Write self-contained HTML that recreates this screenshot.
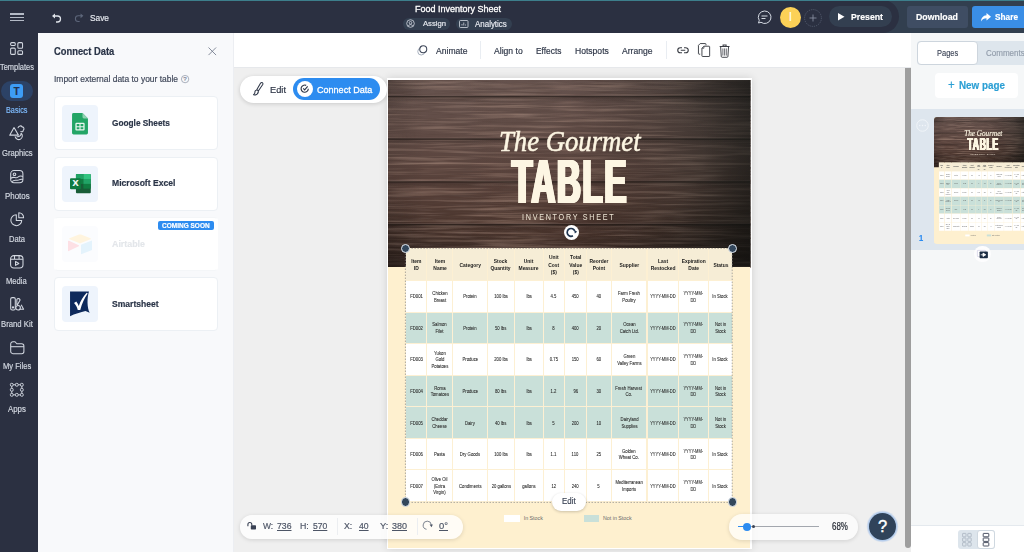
<!DOCTYPE html>
<html lang="en"><head><meta charset="utf-8"><title>Food Inventory Sheet</title>
<style>
html,body{margin:0;padding:0}
body{width:1024px;height:552px;overflow:hidden;position:relative;background:#efefef;font-family:"Liberation Sans",sans-serif;}
.a{position:absolute}
.t{position:absolute;white-space:nowrap;display:block;transform-origin:0 50%;-webkit-text-stroke:0.18px}
svg{position:absolute;overflow:visible}
.c{display:flex;align-items:center;justify-content:center;text-align:center;font-size:5px;line-height:6.8px;color:#2a2a2a;white-space:nowrap;overflow:hidden;box-sizing:border-box;padding-top:0.6px;-webkit-text-stroke:0.08px #2a2a2a}
.c span{display:inline-block;transform:scaleX(.85)}
.c span.d{transform:scaleX(.8)}
.c.h{font-weight:700;font-size:5.2px;line-height:7.6px;color:#1a1a1a;padding-top:2.2px;-webkit-text-stroke:0}
.c.h span{transform:scaleX(.95)}
.th .c{color:#555;-webkit-text-stroke:0}
</style></head><body>
<div class="a" style="left:234px;top:67px;width:677px;height:485px;background:#efefef"></div>
<div class="a" style="left:387px;top:78px;width:365px;height:471px;background:#fff;box-shadow:0 0 8px rgba(0,0,0,0.13)"></div>
<div class="a" style="left:387.7px;top:79.5px;width:362.5px;height:468px;background:#fef0cf"><svg style="left:0;top:0" width="362.5" height="187.3" viewBox="0 0 362.5 187.3"><defs><linearGradient id="wbg" x1="0" y1="0" x2="0" y2="1"><stop offset="0" stop-color="#67544f"/><stop offset="0.3" stop-color="#604b45"/><stop offset="0.55" stop-color="#574039"/><stop offset="0.8" stop-color="#49342c"/><stop offset="1" stop-color="#3b2b25"/></linearGradient><linearGradient id="whg" x1="0" y1="0" x2="1" y2="0"><stop offset="0" stop-color="#000" stop-opacity="0.10"/><stop offset="0.1" stop-color="#000" stop-opacity="0"/><stop offset="0.5" stop-color="#000" stop-opacity="0.02"/><stop offset="0.8" stop-color="#0c1412" stop-opacity="0.27"/><stop offset="1" stop-color="#0c1412" stop-opacity="0.55"/></linearGradient><radialGradient id="wcg" cx="0.42" cy="0.4" r="0.75"><stop offset="0" stop-color="#000" stop-opacity="0"/><stop offset="0.6" stop-color="#000" stop-opacity="0"/><stop offset="1" stop-color="#000" stop-opacity="0.38"/></radialGradient><linearGradient id="psg" x1="0" y1="0" x2="0" y2="1"><stop offset="0" stop-color="#1d1614" stop-opacity="0.22"/><stop offset="1" stop-color="#1d1614" stop-opacity="0"/></linearGradient><filter id="grg" x="0" y="0" width="100%" height="100%"><feTurbulence type="fractalNoise" baseFrequency="0.035 0.55" numOctaves="4" seed="7"/><feColorMatrix type="matrix" values="0 0 0 0 0.10  0 0 0 0 0.06  0 0 0 0 0.05  1.5 0 0 0 -0.62"/></filter><filter id="glg" x="0" y="0" width="100%" height="100%"><feTurbulence type="fractalNoise" baseFrequency="0.012 0.35" numOctaves="3" seed="23"/><feColorMatrix type="matrix" values="0 0 0 0 0.62  0 0 0 0 0.42  0 0 0 0 0.33  0.9 0 0 0 -0.40"/></filter></defs><rect width="362.5" height="187.3" fill="url(#wbg)"/><rect width="362.5" height="187.3" filter="url(#grg)"/><rect width="362.5" height="187.3" filter="url(#glg)"/><rect x="0" y="14.9" width="362.5" height="1.1" fill="#7a6660" opacity="0.35"/><rect x="0" y="15.9" width="362.5" height="1.5" fill="#1d1614" opacity="0.62"/><rect x="0" y="17.4" width="362.5" height="5" fill="url(#psg)"/><rect x="0" y="57.4" width="362.5" height="1.1" fill="#7a6660" opacity="0.35"/><rect x="0" y="58.4" width="362.5" height="1.5" fill="#1d1614" opacity="0.62"/><rect x="0" y="59.9" width="362.5" height="5" fill="url(#psg)"/><rect x="0" y="100.2" width="362.5" height="1.1" fill="#7a6660" opacity="0.35"/><rect x="0" y="101.2" width="362.5" height="1.5" fill="#1d1614" opacity="0.62"/><rect x="0" y="102.7" width="362.5" height="5" fill="url(#psg)"/><rect x="0" y="143.0" width="362.5" height="1.1" fill="#7a6660" opacity="0.35"/><rect x="0" y="144.0" width="362.5" height="1.5" fill="#1d1614" opacity="0.62"/><rect x="0" y="145.5" width="362.5" height="5" fill="url(#psg)"/><rect width="362.5" height="187.3" fill="url(#whg)"/><rect width="362.5" height="187.3" fill="url(#wcg)"/></svg><div class="a" style="left:0;top:187.3px;width:362.5px;height:280.7px;background:#fef0cf"></div><span class="t" style="left:111.5px;top:43px;width:142px;height:40px;"><span class="t" style="left:0;top:0;font-family:'Liberation Serif',serif;font-style:italic;font-size:29px;line-height:36px;color:#fdf6e3;-webkit-text-stroke:0.55px #fdf6e3;transform-origin:0 0;transform:scaleX(0.92)" id="script">The Gourmet</span></span><span class="t" style="left:123.9px;top:73.3px;font-weight:700;font-size:62.2px;line-height:58px;color:#fdf6e3;transform-origin:0 0;transform:scaleX(0.533);letter-spacing:3px;text-shadow:1px 0 #fdf6e3,-1px 0 #fdf6e3,2px 0 #fdf6e3,-2px 0 #fdf6e3,2.6px 0 #fdf6e3,-2.6px 0 #fdf6e3" id="ttl">TABLE</span><span class="t" style="-webkit-text-stroke:0;left:134.6px;top:132px;font-size:8.4px;line-height:10px;letter-spacing:2.0px;color:#efe7d6;transform-origin:0 50%;transform:scaleX(0.86)" id="inv">INVENTORY SHEET</span><div class="a" style="left:18.2px;top:168.7px;width:326.6px;height:253.4px;background:#fdf0d3"></div><div class="a c h" style="left:18.80px;top:169.20px;width:19.60px;height:31.30px;background:#f6edd6"><span>Item<br>ID</span></div><div class="a c h" style="left:39.60px;top:169.20px;width:24.70px;height:31.30px;background:#f6edd6"><span>Item<br>Name</span></div><div class="a c h" style="left:65.50px;top:169.20px;width:33.60px;height:31.30px;background:#f6edd6"><span>Category</span></div><div class="a c h" style="left:100.30px;top:169.20px;width:26.00px;height:31.30px;background:#f6edd6"><span>Stock<br>Quantity</span></div><div class="a c h" style="left:127.50px;top:169.20px;width:27.40px;height:31.30px;background:#f6edd6"><span>Unit<br>Measure</span></div><div class="a c h" style="left:156.10px;top:169.20px;width:20.10px;height:31.30px;background:#f6edd6"><span>Unit<br>Cost<br>($)</span></div><div class="a c h" style="left:177.40px;top:169.20px;width:20.60px;height:31.30px;background:#f6edd6"><span>Total<br>Value<br>($)</span></div><div class="a c h" style="left:199.20px;top:169.20px;width:23.80px;height:31.30px;background:#f6edd6"><span>Reorder<br>Point</span></div><div class="a c h" style="left:224.20px;top:169.20px;width:34.50px;height:31.30px;background:#f6edd6"><span>Supplier</span></div><div class="a c h" style="left:259.90px;top:169.20px;width:30.50px;height:31.30px;background:#f6edd6"><span>Last<br>Restocked</span></div><div class="a c h" style="left:291.60px;top:169.20px;width:28.70px;height:31.30px;background:#f6edd6"><span>Expiration<br>Date</span></div><div class="a c h" style="left:321.50px;top:169.20px;width:22.70px;height:31.30px;background:#f6edd6"><span>Status</span></div><div class="a c" style="left:18.80px;top:201.50px;width:19.60px;height:30.58px;background:#ffffff"><span>FD001</span></div><div class="a c" style="left:39.60px;top:201.50px;width:24.70px;height:30.58px;background:#ffffff"><span>Chicken<br>Breast</span></div><div class="a c" style="left:65.50px;top:201.50px;width:33.60px;height:30.58px;background:#ffffff"><span>Protein</span></div><div class="a c" style="left:100.30px;top:201.50px;width:26.00px;height:30.58px;background:#ffffff"><span>100 lbs</span></div><div class="a c" style="left:127.50px;top:201.50px;width:27.40px;height:30.58px;background:#ffffff"><span>lbs</span></div><div class="a c" style="left:156.10px;top:201.50px;width:20.10px;height:30.58px;background:#ffffff"><span>4.5</span></div><div class="a c" style="left:177.40px;top:201.50px;width:20.60px;height:30.58px;background:#ffffff"><span>450</span></div><div class="a c" style="left:199.20px;top:201.50px;width:23.80px;height:30.58px;background:#ffffff"><span>40</span></div><div class="a c" style="left:224.20px;top:201.50px;width:34.50px;height:30.58px;background:#ffffff"><span>Farm Fresh<br>Poultry</span></div><div class="a c" style="left:259.90px;top:201.50px;width:30.50px;height:30.58px;background:#ffffff"><span class="d">YYYY-MM-DD</span></div><div class="a c" style="left:291.60px;top:201.50px;width:28.70px;height:30.58px;background:#ffffff"><span class="d">YYYY-MM-<br>DD</span></div><div class="a c" style="left:321.50px;top:201.50px;width:22.70px;height:30.58px;background:#ffffff"><span>In Stock</span></div><div class="a c" style="left:18.80px;top:233.08px;width:19.60px;height:30.58px;background:#c9e0d9"><span>FD002</span></div><div class="a c" style="left:39.60px;top:233.08px;width:24.70px;height:30.58px;background:#c9e0d9"><span>Salmon<br>Filet</span></div><div class="a c" style="left:65.50px;top:233.08px;width:33.60px;height:30.58px;background:#c9e0d9"><span>Protein</span></div><div class="a c" style="left:100.30px;top:233.08px;width:26.00px;height:30.58px;background:#c9e0d9"><span>50 lbs</span></div><div class="a c" style="left:127.50px;top:233.08px;width:27.40px;height:30.58px;background:#c9e0d9"><span>lbs</span></div><div class="a c" style="left:156.10px;top:233.08px;width:20.10px;height:30.58px;background:#c9e0d9"><span>8</span></div><div class="a c" style="left:177.40px;top:233.08px;width:20.60px;height:30.58px;background:#c9e0d9"><span>400</span></div><div class="a c" style="left:199.20px;top:233.08px;width:23.80px;height:30.58px;background:#c9e0d9"><span>20</span></div><div class="a c" style="left:224.20px;top:233.08px;width:34.50px;height:30.58px;background:#c9e0d9"><span>Ocean<br>Catch Ltd.</span></div><div class="a c" style="left:259.90px;top:233.08px;width:30.50px;height:30.58px;background:#c9e0d9"><span class="d">YYYY-MM-DD</span></div><div class="a c" style="left:291.60px;top:233.08px;width:28.70px;height:30.58px;background:#c9e0d9"><span class="d">YYYY-MM-<br>DD</span></div><div class="a c" style="left:321.50px;top:233.08px;width:22.70px;height:30.58px;background:#c9e0d9"><span>Not in<br>Stock</span></div><div class="a c" style="left:18.80px;top:264.66px;width:19.60px;height:30.58px;background:#ffffff"><span>FD003</span></div><div class="a c" style="left:39.60px;top:264.66px;width:24.70px;height:30.58px;background:#ffffff"><span>Yukon<br>Gold<br>Potatoes</span></div><div class="a c" style="left:65.50px;top:264.66px;width:33.60px;height:30.58px;background:#ffffff"><span>Produce</span></div><div class="a c" style="left:100.30px;top:264.66px;width:26.00px;height:30.58px;background:#ffffff"><span>200 lbs</span></div><div class="a c" style="left:127.50px;top:264.66px;width:27.40px;height:30.58px;background:#ffffff"><span>lbs</span></div><div class="a c" style="left:156.10px;top:264.66px;width:20.10px;height:30.58px;background:#ffffff"><span>0.75</span></div><div class="a c" style="left:177.40px;top:264.66px;width:20.60px;height:30.58px;background:#ffffff"><span>150</span></div><div class="a c" style="left:199.20px;top:264.66px;width:23.80px;height:30.58px;background:#ffffff"><span>60</span></div><div class="a c" style="left:224.20px;top:264.66px;width:34.50px;height:30.58px;background:#ffffff"><span>Green<br>Valley Farms</span></div><div class="a c" style="left:259.90px;top:264.66px;width:30.50px;height:30.58px;background:#ffffff"><span class="d">YYYY-MM-DD</span></div><div class="a c" style="left:291.60px;top:264.66px;width:28.70px;height:30.58px;background:#ffffff"><span class="d">YYYY-MM-<br>DD</span></div><div class="a c" style="left:321.50px;top:264.66px;width:22.70px;height:30.58px;background:#ffffff"><span>In Stock</span></div><div class="a c" style="left:18.80px;top:296.24px;width:19.60px;height:30.58px;background:#c9e0d9"><span>FD004</span></div><div class="a c" style="left:39.60px;top:296.24px;width:24.70px;height:30.58px;background:#c9e0d9"><span>Roma<br>Tomatoes</span></div><div class="a c" style="left:65.50px;top:296.24px;width:33.60px;height:30.58px;background:#c9e0d9"><span>Produce</span></div><div class="a c" style="left:100.30px;top:296.24px;width:26.00px;height:30.58px;background:#c9e0d9"><span>80 lbs</span></div><div class="a c" style="left:127.50px;top:296.24px;width:27.40px;height:30.58px;background:#c9e0d9"><span>lbs</span></div><div class="a c" style="left:156.10px;top:296.24px;width:20.10px;height:30.58px;background:#c9e0d9"><span>1.2</span></div><div class="a c" style="left:177.40px;top:296.24px;width:20.60px;height:30.58px;background:#c9e0d9"><span>96</span></div><div class="a c" style="left:199.20px;top:296.24px;width:23.80px;height:30.58px;background:#c9e0d9"><span>30</span></div><div class="a c" style="left:224.20px;top:296.24px;width:34.50px;height:30.58px;background:#c9e0d9"><span>Fresh Harvest<br>Co.</span></div><div class="a c" style="left:259.90px;top:296.24px;width:30.50px;height:30.58px;background:#c9e0d9"><span class="d">YYYY-MM-DD</span></div><div class="a c" style="left:291.60px;top:296.24px;width:28.70px;height:30.58px;background:#c9e0d9"><span class="d">YYYY-MM-<br>DD</span></div><div class="a c" style="left:321.50px;top:296.24px;width:22.70px;height:30.58px;background:#c9e0d9"><span>Not in<br>Stock</span></div><div class="a c" style="left:18.80px;top:327.82px;width:19.60px;height:30.58px;background:#c9e0d9"><span>FD005</span></div><div class="a c" style="left:39.60px;top:327.82px;width:24.70px;height:30.58px;background:#c9e0d9"><span>Cheddar<br>Cheese</span></div><div class="a c" style="left:65.50px;top:327.82px;width:33.60px;height:30.58px;background:#c9e0d9"><span>Dairy</span></div><div class="a c" style="left:100.30px;top:327.82px;width:26.00px;height:30.58px;background:#c9e0d9"><span>40 lbs</span></div><div class="a c" style="left:127.50px;top:327.82px;width:27.40px;height:30.58px;background:#c9e0d9"><span>lbs</span></div><div class="a c" style="left:156.10px;top:327.82px;width:20.10px;height:30.58px;background:#c9e0d9"><span>5</span></div><div class="a c" style="left:177.40px;top:327.82px;width:20.60px;height:30.58px;background:#c9e0d9"><span>200</span></div><div class="a c" style="left:199.20px;top:327.82px;width:23.80px;height:30.58px;background:#c9e0d9"><span>10</span></div><div class="a c" style="left:224.20px;top:327.82px;width:34.50px;height:30.58px;background:#c9e0d9"><span>Dairyland<br>Supplies</span></div><div class="a c" style="left:259.90px;top:327.82px;width:30.50px;height:30.58px;background:#c9e0d9"><span class="d">YYYY-MM-DD</span></div><div class="a c" style="left:291.60px;top:327.82px;width:28.70px;height:30.58px;background:#c9e0d9"><span class="d">YYYY-MM-<br>DD</span></div><div class="a c" style="left:321.50px;top:327.82px;width:22.70px;height:30.58px;background:#c9e0d9"><span>Not in<br>Stock</span></div><div class="a c" style="left:18.80px;top:359.40px;width:19.60px;height:30.58px;background:#ffffff"><span>FD006</span></div><div class="a c" style="left:39.60px;top:359.40px;width:24.70px;height:30.58px;background:#ffffff"><span>Pasta</span></div><div class="a c" style="left:65.50px;top:359.40px;width:33.60px;height:30.58px;background:#ffffff"><span>Dry Goods</span></div><div class="a c" style="left:100.30px;top:359.40px;width:26.00px;height:30.58px;background:#ffffff"><span>100 lbs</span></div><div class="a c" style="left:127.50px;top:359.40px;width:27.40px;height:30.58px;background:#ffffff"><span>lbs</span></div><div class="a c" style="left:156.10px;top:359.40px;width:20.10px;height:30.58px;background:#ffffff"><span>1.1</span></div><div class="a c" style="left:177.40px;top:359.40px;width:20.60px;height:30.58px;background:#ffffff"><span>110</span></div><div class="a c" style="left:199.20px;top:359.40px;width:23.80px;height:30.58px;background:#ffffff"><span>25</span></div><div class="a c" style="left:224.20px;top:359.40px;width:34.50px;height:30.58px;background:#ffffff"><span>Golden<br>Wheat Co.</span></div><div class="a c" style="left:259.90px;top:359.40px;width:30.50px;height:30.58px;background:#ffffff"><span class="d">YYYY-MM-DD</span></div><div class="a c" style="left:291.60px;top:359.40px;width:28.70px;height:30.58px;background:#ffffff"><span class="d">YYYY-MM-<br>DD</span></div><div class="a c" style="left:321.50px;top:359.40px;width:22.70px;height:30.58px;background:#ffffff"><span>In Stock</span></div><div class="a c" style="left:18.80px;top:390.98px;width:19.60px;height:30.58px;background:#ffffff"><span>FD007</span></div><div class="a c" style="left:39.60px;top:390.98px;width:24.70px;height:30.58px;background:#ffffff"><span>Olive Oil<br>(Extra<br>Virgin)</span></div><div class="a c" style="left:65.50px;top:390.98px;width:33.60px;height:30.58px;background:#ffffff"><span>Condiments</span></div><div class="a c" style="left:100.30px;top:390.98px;width:26.00px;height:30.58px;background:#ffffff"><span>20 gallons</span></div><div class="a c" style="left:127.50px;top:390.98px;width:27.40px;height:30.58px;background:#ffffff"><span>gallons</span></div><div class="a c" style="left:156.10px;top:390.98px;width:20.10px;height:30.58px;background:#ffffff"><span>12</span></div><div class="a c" style="left:177.40px;top:390.98px;width:20.60px;height:30.58px;background:#ffffff"><span>240</span></div><div class="a c" style="left:199.20px;top:390.98px;width:23.80px;height:30.58px;background:#ffffff"><span>5</span></div><div class="a c" style="left:224.20px;top:390.98px;width:34.50px;height:30.58px;background:#ffffff"><span>Mediterranean<br>Imports</span></div><div class="a c" style="left:259.90px;top:390.98px;width:30.50px;height:30.58px;background:#ffffff"><span class="d">YYYY-MM-DD</span></div><div class="a c" style="left:291.60px;top:390.98px;width:28.70px;height:30.58px;background:#ffffff"><span class="d">YYYY-MM-<br>DD</span></div><div class="a c" style="left:321.50px;top:390.98px;width:22.70px;height:30.58px;background:#ffffff"><span>In Stock</span></div><div class="a" style="left:116px;top:435.5px;width:16.3px;height:7px;background:#fff"></div><span class="t" style="left:136px;top:434.6px;-webkit-text-stroke:0;font-size:5.3px;line-height:8px;color:#6a6a6a">In Stock</span><div class="a" style="left:196px;top:435.5px;width:15.8px;height:7px;background:#c9e0d9"></div><span class="t" style="left:215.300px;top:434.6px;-webkit-text-stroke:0;font-size:5.3px;line-height:8px;color:#6a6a6a">Not in Stock</span></div>
<svg style="left:405.4px;top:247.8px" width="327.4" height="254" viewBox="0 0 327.4 254"><rect x="0.4" y="0.4" width="326.8" height="254" fill="none" stroke="#8a8a8a" stroke-width="0.7" stroke-dasharray="1.5 1.5"/></svg>
<div class="a" style="left:400.8px;top:243.6px;width:7.4px;height:7.4px;border-radius:50%;background:#33475c;border:1.7px solid #e4ebf3"></div>
<div class="a" style="left:727.6px;top:243.6px;width:7.4px;height:7.4px;border-radius:50%;background:#33475c;border:1.7px solid #e4ebf3"></div>
<div class="a" style="left:400.8px;top:497.2px;width:7.4px;height:7.4px;border-radius:50%;background:#33475c;border:1.7px solid #e4ebf3"></div>
<div class="a" style="left:727.6px;top:497.2px;width:7.4px;height:7.4px;border-radius:50%;background:#33475c;border:1.7px solid #e4ebf3"></div>
<div class="a" style="left:564.4px;top:225px;width:15px;height:15px;border-radius:50%;background:#fff"></div>
<svg style="left:564.4px;top:225px" width="15" height="15" viewBox="0 0 15 15"><path d="M10.72 5.94 A3.9 3.9 0 1 0 8.93 10.84" fill="none" stroke="#1f3550" stroke-width="1.7"/><path d="M10.1 4.9 L13.2 6.7 L10.8 8.4 Z" fill="#1f3550"/></svg>
<div class="a" style="left:239.5px;top:75.5px;width:147.5px;height:27.5px;border-radius:14px;background:#fff;box-shadow:0 1px 4px rgba(0,0,0,0.16)"></div>
<svg style="left:252.800px;top:82px" width="10.500" height="13.500" viewBox="0 0 21 27"><path d="M17.500 1 C19.500 1 20.500 3 19.500 5 L11 17.500 L7.500 15.500 L15 2.500 C15.600 1.500 16.500 1 17.500 1 Z" fill="none" stroke="#2f3748" stroke-width="2.1" stroke-linejoin="round"/><path d="M7.200 16.500 C4.500 16.500 3.500 19 3.800 21.500 C3.500 23.500 2 24.500 1 25.500 C5 26.500 9.500 24.500 10.500 20.500 C10.800 19 10.200 18 9.800 17.800" fill="none" stroke="#2f3748" stroke-width="2.1" stroke-linejoin="round"/></svg>
<span class="t" style="left:270.30px;top:83.86px;font-size:9.3px;line-height:12.09px;color:#2f3748;transform:scaleX(0.998);-webkit-text-stroke:0.2px #2f3748;">Edit</span>
<div class="a" style="left:293px;top:78px;width:87px;height:22px;border-radius:11px;background:#2d8cf0"></div>
<div class="a" style="left:296.500px;top:81px;width:16px;height:16px;border-radius:50%;background:#fff"></div>
<svg style="left:299.800px;top:84.300px" width="9.400" height="9.400" viewBox="0 0 19 19"><path d="M16.800 9.500 A7.300 7.300 0 1 1 12.500 2.800" fill="none" stroke="#2f3748" stroke-width="2.3"/><path d="M6.500 9 L9.400 11.800 L15.500 5" fill="none" stroke="#2f3748" stroke-width="2.3"/></svg>
<span class="t" style="left:317.00px;top:83.60px;font-size:9.53px;line-height:12.39px;color:#ffffff;transform:scaleX(0.950);-webkit-text-stroke:0.3px #fff;">Connect Data</span>
<div class="a" style="left:551.800px;top:493px;width:34.200px;height:18px;border-radius:9px;background:#fff;box-shadow:0 1px 3px rgba(0,0,0,0.2)"></div>
<span class="t" style="left:562.00px;top:496.32px;font-size:9.2px;line-height:11.96px;color:#3a4254;transform:scaleX(0.858);">Edit</span>
<div class="a" style="left:240px;top:514.500px;width:223px;height:24.500px;border-radius:12.300px;background:rgba(255,255,255,0.8);box-shadow:0 1px 4px rgba(0,0,0,0.13)"></div>
<svg style="left:247px;top:521px" width="9.500" height="9.500" viewBox="0 0 19 19"><path d="M1.800 10.500 V6.800 A3.900 3.900 0 0 1 9.600 6.800 V9" fill="none" stroke="#3a4254" stroke-width="2.2"/><rect x="7.600" y="8.600" width="10.400" height="8.400" rx="1.400" fill="#3a4254"/></svg>
<span class="t" style="left:263.30px;top:520.25px;font-size:9.3px;line-height:12.09px;color:#4d5566;transform:scaleX(0.910);">W:</span>
<span class="t" style="left:276.50px;top:520.25px;font-size:9.3px;line-height:12.09px;color:#4d5566;transform:scaleX(0.935);text-decoration:underline;text-underline-offset:1px;text-decoration-thickness:0.8px;">736</span>
<span class="t" style="left:299.50px;top:520.25px;font-size:9.3px;line-height:12.09px;color:#4d5566;transform:scaleX(0.945);">H:</span>
<span class="t" style="left:313.00px;top:520.25px;font-size:9.3px;line-height:12.09px;color:#4d5566;transform:scaleX(0.922);text-decoration:underline;text-underline-offset:1px;text-decoration-thickness:0.8px;">570</span>
<div class="a" style="left:337px;top:518px;width:1px;height:17px;background:#eceef1"></div>
<span class="t" style="left:344.00px;top:520.25px;font-size:9.3px;line-height:12.09px;color:#4d5566;transform:scaleX(0.944);">X:</span>
<span class="t" style="left:359.00px;top:520.25px;font-size:9.3px;line-height:12.09px;color:#4d5566;transform:scaleX(0.928);text-decoration:underline;text-underline-offset:1px;text-decoration-thickness:0.8px;">40</span>
<span class="t" style="left:380.00px;top:520.25px;font-size:9.3px;line-height:12.09px;color:#4d5566;transform:scaleX(1.002);">Y:</span>
<span class="t" style="left:392.00px;top:520.25px;font-size:9.3px;line-height:12.09px;color:#4d5566;transform:scaleX(0.967);text-decoration:underline;text-underline-offset:1px;text-decoration-thickness:0.8px;">380</span>
<div class="a" style="left:417px;top:518px;width:1px;height:17px;background:#eceef1"></div>
<svg style="left:421.8px;top:520.2px" width="10.5" height="10.5" viewBox="0 0 21 21"><path d="M9.08 18.58 A8.2 8.2 0 1 1 18.67 9.79" fill="none" stroke="#5a6475" stroke-width="1.6"/><path d="M15.2 9.2 L21.8 8.8 L19 14.6 Z" fill="#4d5566"/></svg>
<span class="t" style="left:439.00px;top:520.25px;font-size:9.3px;line-height:12.09px;color:#4d5566;transform:scaleX(1.012);text-decoration:underline;text-underline-offset:1px;text-decoration-thickness:0.8px;">0&deg;</span>
<div class="a" style="left:729px;top:514px;width:128.500px;height:26px;border-radius:13px;background:rgba(255,255,255,0.7);box-shadow:0 1px 4px rgba(0,0,0,0.13)"></div>
<div class="a" style="left:738px;top:526px;width:81px;height:1px;background:#a3a7ae"></div>
<div class="a" style="left:738px;top:525.700px;width:10px;height:1.600px;background:#2d8cf0"></div>
<div class="a" style="left:751.500px;top:525px;width:3px;height:3px;border-radius:50%;background:#3a4254"></div>
<div class="a" style="left:743.300px;top:522.500px;width:8px;height:8px;border-radius:50%;background:#2d8cf0"></div>
<span class="t" style="left:832.30px;top:519.54px;font-size:10.4px;line-height:13.52px;color:#1d222c;transform:scaleX(0.765);-webkit-text-stroke:0.2px #1d222c;">68%</span>
<div class="a" style="left:869px;top:513px;width:27px;height:27px;border-radius:50%;background:#30435a;box-shadow:0 0 0 1.3px #b5cdec,0 0 0 2.2px rgba(181,205,236,0.45)"></div>
<span class="t" style="left:869px;top:513.2px;width:27px;text-align:center;font-size:16.5px;line-height:27px;color:#fff;-webkit-text-stroke:0.45px #fff">?</span>
<div class="a" style="left:0;top:0;width:1024px;height:33px;background:#323f4f"></div>
<div class="a" style="left:0;top:0;width:899px;height:33px;background:#2b3041;border-radius:0 17px 17px 0"></div>
<div class="a" style="left:0;top:0;width:1024px;height:1.3px;background:#3d7f8c"></div>
<div class="a" style="left:10px;top:14.0px;width:13.5px;height:1.3px;background:#b4bac6;margin-top:-0.6px"></div>
<div class="a" style="left:10px;top:17.3px;width:13.5px;height:1.3px;background:#b4bac6;margin-top:-0.6px"></div>
<div class="a" style="left:10px;top:20.5px;width:13.5px;height:1.3px;background:#b4bac6;margin-top:-0.6px"></div>
<svg style="left:52px;top:12.5px" width="10" height="10" viewBox="0 0 20 20"><path d="M3 6 H11 A6 6 0 0 1 11 18 H8" fill="none" stroke="#dfe3ea" stroke-width="2.6"/><path d="M0 6 L6 1 V11 Z" fill="#dfe3ea"/></svg>
<svg style="left:74px;top:13px" width="9.4" height="9.4" viewBox="0 0 20 20"><path d="M17 6 H9 A6 6 0 0 0 9 18 H12" fill="none" stroke="#5d667a" stroke-width="2.2"/><path d="M20 6 L14 1 V11 Z" fill="#5d667a"/></svg>
<span class="t" style="left:90.00px;top:11.76px;font-size:9.75px;line-height:12.68px;color:#e6e9ef;transform:scaleX(0.855);">Save</span>
<span class="t" style="left:414.50px;top:3.99px;font-size:9.1px;line-height:11.83px;color:#ffffff;transform:scaleX(0.989);-webkit-text-stroke:0.3px #fff;">Food Inventory Sheet</span>
<div class="a" style="left:403px;top:18px;width:47px;height:11.5px;border-radius:6px;background:#333f50"></div>
<svg style="left:405.5px;top:19.3px" width="9" height="9" viewBox="0 0 18 18"><circle cx="9" cy="9" r="7.6" fill="none" stroke="#d5dae3" stroke-width="1.6"/><circle cx="9" cy="7.5" r="2.6" fill="none" stroke="#d5dae3" stroke-width="1.5"/><path d="M4.5 14 A5 5 0 0 1 13.5 14" fill="none" stroke="#d5dae3" stroke-width="1.5"/></svg>
<span class="t" style="left:422.50px;top:18.75px;font-size:8.07px;line-height:10.49px;color:#e6e9ef;transform:scaleX(0.950);">Assign</span>
<div class="a" style="left:455.5px;top:18px;width:56.5px;height:11.5px;border-radius:6px;background:#333f50"></div>
<svg style="left:459px;top:19.8px" width="9.5" height="8" viewBox="0 0 19 16"><rect x="1" y="1" width="17" height="14" rx="2" fill="none" stroke="#d5dae3" stroke-width="1.6"/><path d="M6 11 V8 M9.5 11 V5 M13 11 V9" stroke="#d5dae3" stroke-width="1.5"/></svg>
<span class="t" style="left:475.00px;top:18.56px;font-size:8.37px;line-height:10.88px;color:#e6e9ef;transform:scaleX(0.950);">Analytics</span>
<svg style="left:757px;top:10px" width="15" height="14.5" viewBox="0 0 30 29"><path d="M15 2 A12.5 12.5 0 1 1 8 24.5 L3 26 L4.5 21 A12.5 12.5 0 0 1 15 2 Z" fill="none" stroke="#d5dae3" stroke-width="2"/><path d="M9 12 H21 M9 17 H17" stroke="#d5dae3" stroke-width="2"/></svg>
<div class="a" style="left:780px;top:6.5px;width:21px;height:21px;border-radius:50%;background:#fcd157"></div>
<span class="t" style="left:780px;top:6.5px;width:21px;text-align:center;font-size:12px;line-height:21px;color:#fff;-webkit-text-stroke:0">I</span>
<svg style="left:804px;top:8.5px" width="18" height="18" viewBox="0 0 18 18"><circle cx="9" cy="9" r="8.4" fill="none" stroke="#596275" stroke-width="0.8" stroke-dasharray="1.2 1"/><path d="M5.500 9 H12.500 M9 5.500 V12.500" stroke="#8f98a8" stroke-width="0.8"/></svg>
<div class="a" style="left:829px;top:6px;width:63px;height:21px;border-radius:11px;background:#333f50"></div>
<svg style="left:838px;top:13px" width="6.5" height="7.5" viewBox="0 0 13 15"><path d="M0 0 L13 7.5 L0 15 Z" fill="#fff"/></svg>
<span class="t" style="left:851.00px;top:10.83px;font-size:9.8px;line-height:12.74px;color:#ffffff;font-weight:700;transform:scaleX(0.890);">Present</span>
<div class="a" style="left:907px;top:6.4px;width:60.5px;height:21.2px;border-radius:3px;background:#3f4d63"></div>
<span class="t" style="left:916.00px;top:11.13px;font-size:9.8px;line-height:12.74px;color:#ffffff;font-weight:700;transform:scaleX(0.897);">Download</span>
<div class="a" style="left:972.3px;top:6.4px;width:60px;height:21.2px;border-radius:3px;background:#3a8ee6"></div>
<svg style="left:981px;top:12.5px" width="10" height="9" viewBox="0 0 20 18"><path d="M11 0 L20 7.5 L11 15 V10.5 C6 10.5 2.5 12 0 17 C0.5 10 4 5 11 4.5 Z" fill="#fff"/></svg>
<span class="t" style="left:995.00px;top:11.33px;font-size:9.8px;line-height:12.74px;color:#ffffff;font-weight:700;transform:scaleX(0.845);">Share</span>
<div class="a" style="left:0;top:33px;width:37.5px;height:519px;background:#2b3041"></div>
<svg style="left:9.7px;top:41.8px" width="13.4" height="13.8" viewBox="0 0 27 28"><g fill="none" stroke="#d3d8e1" stroke-width="2.1"><rect x="1.2" y="1.3" width="9.4" height="5.6" rx="2"/><rect x="15.8" y="1.3" width="9.6" height="11.4" rx="2"/><rect x="1.2" y="12.4" width="9.4" height="12.7" rx="2"/><rect x="15.800" y="17.800" width="9.600" height="7.300" rx="2"/></g></svg>
<span class="t" style="left:0.30px;top:62.34px;font-size:8.4px;line-height:10.92px;color:#d3d8e1;transform:scaleX(0.888);">Templates</span>
<div class="a" style="left:1px;top:80.8px;width:32px;height:20.4px;border-radius:10.2px;background:#2c4266"></div>
<div class="a" style="left:9.6px;top:84.2px;width:13.8px;height:13.8px;border-radius:3px;background:#3d9cf5"></div>
<span class="t" style="left:9.6px;top:84.6px;width:13.8px;text-align:center;font-size:10px;line-height:13.4px;font-weight:700;color:#22314f">T</span>
<span class="t" style="left:6.20px;top:105.34px;font-size:8.4px;line-height:10.92px;color:#7fbcff;transform:scaleX(0.867);">Basics</span>
<svg style="left:9.3px;top:125px" width="15.6" height="15.6" viewBox="0 0 30 30"><g fill="none" stroke="#d3d8e1" stroke-width="2" stroke-linejoin="round" stroke-linecap="round"><path d="M9.7 5 L18.2 19.5 H1.4 Z"/><path d="M17.5 5.2 C18.5 1.2 23.5 0.6 25.3 3.6 C28.8 3.6 30 8 27.4 10.2 C27.6 12.8 24.6 13.8 22.6 12.4"/><path d="M11.8 22.5 A7 7 0 1 0 23.2 15.8 C23.6 20 20 23.2 15.2 22.6"/></g></svg>
<span class="t" style="left:1.60px;top:148.04px;font-size:8.4px;line-height:10.92px;color:#d3d8e1;transform:scaleX(0.916);">Graphics</span>
<svg style="left:10px;top:169.8px" width="13.6" height="13.4" viewBox="0 0 27 27"><g fill="none" stroke="#d3d8e1" stroke-width="2.1"><rect x="1.2" y="1.2" width="24.6" height="24.6" rx="6.5"/><circle cx="8.8" cy="8.6" r="2.7"/><path d="M1.5 17 C7 11.5 11 18 15 15 C19 12 22 11 25.6 13.5"/><path d="M4 23.5 C9 17.5 14 22.5 18 20 C21 18.2 23 18 25.6 19"/></g></svg>
<span class="t" style="left:4.60px;top:190.84px;font-size:8.4px;line-height:10.92px;color:#d3d8e1;transform:scaleX(0.943);">Photos</span>
<svg style="left:9.6px;top:212px" width="14.6" height="14.4" viewBox="0 0 29 29"><g fill="none" stroke="#d3d8e1" stroke-width="2.1" stroke-linejoin="round"><path d="M12.5 5.5 A11 11 0 1 0 23.5 17 H12.5 Z"/><path d="M17.5 1.6 A9.6 9.6 0 0 1 27.2 11.4 H17.5 Z"/></g></svg>
<span class="t" style="left:8.80px;top:233.54px;font-size:8.4px;line-height:10.92px;color:#d3d8e1;transform:scaleX(0.904);">Data</span>
<svg style="left:10px;top:254.6px" width="13.6" height="13.6" viewBox="0 0 27 27"><g fill="none" stroke="#d3d8e1" stroke-width="2.1" stroke-linejoin="round"><rect x="1.2" y="1.2" width="24.6" height="24.6" rx="6.5"/><path d="M1.5 8.6 H25.5 M9 1.5 V8.4 M18 1.5 V8.4"/><path d="M11 13 L17.5 16.8 L11 20.6 Z"/></g></svg>
<span class="t" style="left:6.30px;top:275.94px;font-size:8.4px;line-height:10.92px;color:#d3d8e1;transform:scaleX(0.907);">Media</span>
<svg style="left:9.8px;top:297.2px" width="14.2" height="14" viewBox="0 0 28 28"><g fill="none" stroke="#d3d8e1" stroke-width="2.1" stroke-linejoin="round"><rect x="1.2" y="1.2" width="9.2" height="24.6" rx="3"/><circle cx="5.8" cy="20.6" r="1.3"/><path d="M13.5 5 C15.5 2 19 3 20 6 L15 15 L13.5 15 Z"/><circle cx="16" cy="21.5" r="4.6"/><path d="M22.2 15.5 L27 24.5 H18.6"/></g></svg>
<span class="t" style="left:1.00px;top:318.54px;font-size:8.4px;line-height:10.92px;color:#d3d8e1;transform:scaleX(0.923);">Brand Kit</span>
<svg style="left:9.8px;top:340.6px" width="14.6" height="13.4" viewBox="0 0 29 27"><g fill="none" stroke="#d3d8e1" stroke-width="2.1" stroke-linejoin="round"><path d="M1.2 9 V6 A4.5 4.5 0 0 1 5.7 1.5 H10 L13.5 5.5 H23.3 A4.5 4.5 0 0 1 27.8 10 V21 A4.5 4.5 0 0 1 23.3 25.5 H5.7 A4.5 4.5 0 0 1 1.2 21 Z"/><path d="M1.2 11.5 H27.8"/></g></svg>
<span class="t" style="left:2.80px;top:361.34px;font-size:8.4px;line-height:10.92px;color:#d3d8e1;transform:scaleX(0.904);">My Files</span>
<svg style="left:9.9px;top:382.8px" width="13.6" height="13.6" viewBox="0 0 27 27"><g fill="none" stroke="#d3d8e1" stroke-width="1.9"><rect x="0.7" y="0.7" width="5.6" height="5.6" rx="2.2"/><rect x="10.7" y="0.7" width="5.6" height="5.6" rx="2.2"/><rect x="20.7" y="0.7" width="5.6" height="5.6" rx="2.2"/><rect x="0.7" y="10.7" width="5.6" height="5.6" rx="2.2"/><rect x="20.7" y="10.7" width="5.6" height="5.6" rx="2.2"/><rect x="0.7" y="20.7" width="5.6" height="5.6" rx="2.2"/><rect x="10.7" y="20.7" width="5.6" height="5.6" rx="2.2"/><rect x="20.7" y="20.7" width="5.6" height="5.6" rx="2.2"/><path d="M6.3 3.5 H10.7 M16.3 3.5 H20.7 M6.3 23.5 H10.7 M16.3 23.5 H20.7 M3.5 6.3 V10.7 M3.5 16.3 V20.7 M23.5 6.3 V10.7 M23.5 16.3 V20.7"/></g></svg>
<span class="t" style="left:8.30px;top:403.94px;font-size:8.4px;line-height:10.92px;color:#d3d8e1;transform:scaleX(0.937);">Apps</span>
<div class="a" style="left:37.5px;top:33px;width:196px;height:519px;background:#f8f9fb;border-right:1px solid #eceef2;box-sizing:border-box"></div>
<span class="t" style="left:53.50px;top:45.04px;font-size:10.1px;line-height:13.13px;color:#2a3447;font-weight:700;transform:scaleX(0.927);-webkit-text-stroke:0.2px #2a3447;">Connect Data</span>
<svg style="left:207.5px;top:47px" width="8.6" height="8.6" viewBox="0 0 17 17"><path d="M1 1 L16 16 M16 1 L1 16" stroke="#6b7385" stroke-width="1.6"/></svg>
<span class="t" style="left:54.00px;top:73.52px;font-size:9.2px;line-height:11.96px;color:#3e4658;transform:scaleX(0.920);">Import external data to your table</span>
<svg style="left:181px;top:75px" width="8.2" height="8.2" viewBox="0 0 16 16"><circle cx="8" cy="8" r="7.2" fill="none" stroke="#7b8496" stroke-width="1.2"/></svg>
<span class="t" style="left:181px;top:75.2px;width:8.2px;text-align:center;font-size:6.2px;line-height:8.2px;color:#7b8496">?</span>
<div class="a" style="left:54px;top:96.4px;width:164px;height:54px;box-sizing:border-box;background:#fff;border:1px solid #ecf0f4;border-radius:4px"></div>
<div class="a" style="left:61.8px;top:105.4px;width:36.4px;height:36.2px;border-radius:4px;background:#eef4fc"></div>
<svg style="left:72px;top:112.6px" width="16" height="21.4" viewBox="0 0 32 43"><path d="M3 0 H21 L32 11 V40 A3 3 0 0 1 29 43 H3 A3 3 0 0 1 0 40 V3 A3 3 0 0 1 3 0 Z" fill="#23a566"/><path d="M21 0 L32 11 H24 A3 3 0 0 1 21 8 Z" fill="#8ed1b1"/><rect x="8" y="21" width="16" height="13" rx="1" fill="none" stroke="#e9f6ef" stroke-width="2.6"/><path d="M16 21 V34 M8 27.5 H24" stroke="#e9f6ef" stroke-width="2.2"/></svg>
<span class="t" style="left:111.60px;top:116.90px;font-size:9.7px;line-height:12.61px;color:#2a3447;font-weight:700;transform:scaleX(0.854);-webkit-text-stroke:0.2px #2a3447;">Google Sheets</span>
<div class="a" style="left:54px;top:156.5px;width:164px;height:54px;box-sizing:border-box;background:#fff;border:1px solid #ecf0f4;border-radius:4px"></div>
<div class="a" style="left:61.8px;top:165.5px;width:36.4px;height:36.2px;border-radius:4px;background:#eef4fc"></div>
<svg style="left:70px;top:173.8px" width="20.8" height="19.4" viewBox="0 0 42 39"><path d="M14 0 H40 A2 2 0 0 1 42 2 V37 A2 2 0 0 1 40 39 H14 A2 2 0 0 1 12 37 V2 A2 2 0 0 1 14 0 Z" fill="#185c37"/><rect x="12" y="0" width="15" height="10" fill="#21a366"/><path d="M27 0 H40 A2 2 0 0 1 42 2 V10 H27 Z" fill="#33c481"/><rect x="12" y="10" width="15" height="10" fill="#107c41"/><rect x="27" y="10" width="15" height="10" fill="#21a366"/><rect x="27" y="20" width="15" height="9.5" fill="#107c41"/><rect x="0" y="8.5" width="22" height="22" rx="2" fill="#0f7a40"/></svg>
<span class="t" style="left:70px;top:178px;width:11px;text-align:center;font-size:9px;line-height:11px;font-weight:700;color:#fff">X</span>
<span class="t" style="left:111.60px;top:177.00px;font-size:9.7px;line-height:12.61px;color:#2a3447;font-weight:700;transform:scaleX(0.885);-webkit-text-stroke:0.2px #2a3447;">Microsoft Excel</span>
<div class="a" style="left:54px;top:217.0px;width:164px;height:54px;box-sizing:border-box;background:#fff;border:1px solid #f4f6f8;border-radius:4px;border-left-color:#fff;border-right-color:#fff"></div>
<div class="a" style="left:61.8px;top:226.0px;width:36.4px;height:36.2px;border-radius:4px;background:#fbfcfe"></div>
<svg style="left:68px;top:233.8px" width="24" height="20.2" viewBox="0 0 48 40"><path d="M22 1 L3 8.5 Q1.5 9.5 3 10.5 L22 18 Q24 18.8 26 18 L45 10.5 Q46.500 9.5 45 8.500 L26 1 Q24 0.2 22 1 Z" fill="#fff4de"/><path d="M26 22 V39 Q26 40.500 27.500 40 L47 32.500 Q48 32 48 31 V14 Q48 12.600 46.600 13.200 L27 20.600 Q26 21 26 22 Z" fill="#e4f3fc"/><path d="M21.500 22.500 L2 13.500 Q0 12.600 0 14.500 V33 Q0 34.800 1.600 34 L12 29 L21.500 24.400 Q23 23.400 21.500 22.500 Z" fill="#fde0e5"/></svg>
<span class="t" style="left:111.60px;top:237.69px;font-size:9.7px;line-height:12.61px;color:#e3e6ea;font-weight:700;transform:scaleX(0.915);">Airtable</span>
<div class="a" style="left:158px;top:221.3px;width:55.5px;height:8.8px;border-radius:2px;background:#2d8cf0"></div>
<span class="t" style="left:162.00px;top:221.11px;font-size:7.22px;line-height:9.39px;color:#ffffff;font-weight:700;transform:scaleX(0.900);">COMING SOON</span>
<div class="a" style="left:54px;top:277.2px;width:164px;height:54px;box-sizing:border-box;background:#fff;border:1px solid #ecf0f4;border-radius:4px"></div>
<div class="a" style="left:61.8px;top:286.2px;width:36.4px;height:36.2px;border-radius:4px;background:#eef4fc"></div>
<svg style="left:70.4px;top:291px" width="20" height="25.400" viewBox="0 0 40 51"><path d="M0 1 H38 C34 14 34 34 39.500 43.500 L31 40 C22 42 9 46 0 50.500 Z" fill="#0e2a5c"/><path d="M8 24 L12.500 21 C15 24 16.500 27 17.500 30 C21 20 26 11 33.500 3.500 L35.500 5 C29 14 24 25 20.500 38 H15.500 C14 32 11.500 27.500 8 24 Z" fill="#fff"/></svg>
<span class="t" style="left:111.60px;top:297.59px;font-size:9.7px;line-height:12.61px;color:#2a3447;font-weight:700;transform:scaleX(0.883);-webkit-text-stroke:0.2px #2a3447;">Smartsheet</span>
<div class="a" style="left:234px;top:33px;width:677px;height:35px;background:#fff;border-bottom:1px solid #e6e8eb;box-sizing:border-box"></div>
<svg style="left:417px;top:45px" width="11" height="11" viewBox="0 0 22 22"><circle cx="8.5" cy="13" r="7" fill="none" stroke="#9fa9b8" stroke-width="1.8"/><circle cx="12.5" cy="8.500" r="7" fill="#fff" stroke="#3e4759" stroke-width="2.1"/></svg>
<span class="t" style="left:435.50px;top:45.92px;font-size:9.04px;line-height:11.75px;color:#2f3748;transform:scaleX(0.950);">Animate</span>
<div class="a" style="left:480.2px;top:41px;width:1px;height:18px;background:#e9edf2"></div>
<span class="t" style="left:493.80px;top:45.91px;font-size:9.06px;line-height:11.78px;color:#2f3748;transform:scaleX(0.950);">Align to</span>
<span class="t" style="left:535.80px;top:46.08px;font-size:8.8px;line-height:11.44px;color:#2f3748;transform:scaleX(0.950);">Effects</span>
<span class="t" style="left:575.00px;top:45.93px;font-size:9.02px;line-height:11.73px;color:#2f3748;transform:scaleX(0.950);">Hotspots</span>
<span class="t" style="left:622.00px;top:45.93px;font-size:9.03px;line-height:11.74px;color:#2f3748;transform:scaleX(0.950);">Arrange</span>
<div class="a" style="left:665.6px;top:41px;width:1px;height:18px;background:#e9edf2"></div>
<svg style="left:677px;top:47.4px" width="12" height="6.6" viewBox="0 0 24 13"><path d="M10 1.5 H6.5 A5 5 0 0 0 6.5 11.5 H10 M14 1.5 H17.5 A5 5 0 0 1 17.5 11.5 H14 M7.500 6.500 H16.500" fill="none" stroke="#3a3d44" stroke-width="2.3"/></svg>
<svg style="left:698px;top:43.3px" width="11.8" height="14" viewBox="0 0 24 28"><path d="M4.5 22.5 H2 A1.2 1.2 0 0 1 0.9 21.300 V4.500 L4.500 0.900 H15 A1.200 1.200 0 0 1 16.200 2.100 V4.500" fill="none" stroke="#3a3d44" stroke-width="1.9" stroke-linejoin="round"/><path d="M8 10.500 L12 6.300 H22.500 A1.200 1.200 0 0 1 23.700 7.500 V26 A1.200 1.200 0 0 1 22.500 27.200 H9.200 A1.200 1.200 0 0 1 8 26 Z" fill="#fff" stroke="#3a3d44" stroke-width="1.900" stroke-linejoin="round"/><path d="M8 10.500 H12 V6.300" fill="none" stroke="#3a3d44" stroke-width="1.500"/></svg>
<svg style="left:719px;top:43.600px" width="11.200" height="13.800" viewBox="0 0 22 28"><path d="M1 5 H21 M8 4.500 V2 H14 V4.500" fill="none" stroke="#3a3d44" stroke-width="2.200"/><path d="M3 6 L4.200 25 A2 2 0 0 0 6.200 27 H15.800 A2 2 0 0 0 17.800 25 L19 6" fill="none" stroke="#3a3d44" stroke-width="1.900"/><path d="M7.500 9 V23.500 M11 9 V23.500 M14.500 9 V23.500" stroke="#3a3d44" stroke-width="1.500"/></svg>
<div class="a" style="left:904.5px;top:67.5px;width:6.5px;height:480px;background:#9e9e9e;border-radius:0 0 3px 3px"></div>
<div class="a" style="left:911px;top:33px;width:113px;height:519px;background:#f5f7f8"></div>
<div class="a" style="left:916.7px;top:40.5px;width:120px;height:24.3px;border-radius:4px;background:#dee6ed"></div>
<div class="a" style="left:916.700px;top:40.500px;width:61px;height:24.300px;box-sizing:border-box;border-radius:4px;background:#fff;border:1px solid #cdd5dd"></div>
<span class="t" style="left:936.80px;top:48.09px;font-size:9.1px;line-height:11.83px;color:#3e4658;transform:scaleX(0.822);-webkit-text-stroke:0.15px #3e4658;">Pages</span>
<span class="t" style="left:985.70px;top:48.09px;font-size:9.1px;line-height:11.83px;color:#929dab;transform:scaleX(0.882);">Comments</span>
<div class="a" style="left:935.400px;top:73px;width:82.400px;height:24.600px;border-radius:4px;background:#fff"></div>
<span class="t" style="left:948.30px;top:77.17px;font-size:12.5px;line-height:16.25px;color:#2b9fd4;transform:scaleX(0.916);">+</span>
<span class="t" style="left:958.50px;top:78.09px;font-size:11.4px;line-height:14.82px;color:#2b9fd4;font-weight:700;transform:scaleX(0.863);">New page</span>
<div class="a" style="left:911px;top:109.200px;width:113px;height:141.3px;background:#dee6ee"></div>
<div class="a" style="left:933.6px;top:117px;width:97.5px;height:126.5px;border-radius:3px;overflow:hidden;background:#fef0cf"><div class="a th" style="left:0;top:0;width:362.5px;height:470px;transform:scale(0.2695);transform-origin:0 0"><svg style="left:0;top:0" width="362.5" height="187.3" viewBox="0 0 362.5 187.3"><defs><linearGradient id="wbg2" x1="0" y1="0" x2="0" y2="1"><stop offset="0" stop-color="#67544f"/><stop offset="0.3" stop-color="#604b45"/><stop offset="0.55" stop-color="#574039"/><stop offset="0.8" stop-color="#49342c"/><stop offset="1" stop-color="#3b2b25"/></linearGradient><linearGradient id="whg2" x1="0" y1="0" x2="1" y2="0"><stop offset="0" stop-color="#000" stop-opacity="0.10"/><stop offset="0.1" stop-color="#000" stop-opacity="0"/><stop offset="0.5" stop-color="#000" stop-opacity="0.02"/><stop offset="0.8" stop-color="#0c1412" stop-opacity="0.27"/><stop offset="1" stop-color="#0c1412" stop-opacity="0.55"/></linearGradient><radialGradient id="wcg2" cx="0.42" cy="0.4" r="0.75"><stop offset="0" stop-color="#000" stop-opacity="0"/><stop offset="0.6" stop-color="#000" stop-opacity="0"/><stop offset="1" stop-color="#000" stop-opacity="0.38"/></radialGradient><linearGradient id="psg2" x1="0" y1="0" x2="0" y2="1"><stop offset="0" stop-color="#1d1614" stop-opacity="0.22"/><stop offset="1" stop-color="#1d1614" stop-opacity="0"/></linearGradient><filter id="grg2" x="0" y="0" width="100%" height="100%"><feTurbulence type="fractalNoise" baseFrequency="0.035 0.55" numOctaves="4" seed="7"/><feColorMatrix type="matrix" values="0 0 0 0 0.10  0 0 0 0 0.06  0 0 0 0 0.05  1.5 0 0 0 -0.62"/></filter><filter id="glg2" x="0" y="0" width="100%" height="100%"><feTurbulence type="fractalNoise" baseFrequency="0.012 0.35" numOctaves="3" seed="23"/><feColorMatrix type="matrix" values="0 0 0 0 0.62  0 0 0 0 0.42  0 0 0 0 0.33  0.9 0 0 0 -0.40"/></filter></defs><rect width="362.5" height="187.3" fill="url(#wbg2)"/><rect width="362.5" height="187.3" filter="url(#grg2)"/><rect width="362.5" height="187.3" filter="url(#glg2)"/><rect x="0" y="14.9" width="362.5" height="1.1" fill="#7a6660" opacity="0.35"/><rect x="0" y="15.9" width="362.5" height="1.5" fill="#1d1614" opacity="0.62"/><rect x="0" y="17.4" width="362.5" height="5" fill="url(#psg2)"/><rect x="0" y="57.4" width="362.5" height="1.1" fill="#7a6660" opacity="0.35"/><rect x="0" y="58.4" width="362.5" height="1.5" fill="#1d1614" opacity="0.62"/><rect x="0" y="59.9" width="362.5" height="5" fill="url(#psg2)"/><rect x="0" y="100.2" width="362.5" height="1.1" fill="#7a6660" opacity="0.35"/><rect x="0" y="101.2" width="362.5" height="1.5" fill="#1d1614" opacity="0.62"/><rect x="0" y="102.7" width="362.5" height="5" fill="url(#psg2)"/><rect x="0" y="143.0" width="362.5" height="1.1" fill="#7a6660" opacity="0.35"/><rect x="0" y="144.0" width="362.5" height="1.5" fill="#1d1614" opacity="0.62"/><rect x="0" y="145.5" width="362.5" height="5" fill="url(#psg2)"/><rect width="362.5" height="187.3" fill="url(#whg2)"/><rect width="362.5" height="187.3" fill="url(#wcg2)"/></svg><div class="a" style="left:0;top:187.3px;width:362.5px;height:280.7px;background:#fef0cf"></div><span class="t" style="left:111.5px;top:43px;width:142px;height:40px;"><span class="t" style="left:0;top:0;font-family:'Liberation Serif',serif;font-style:italic;font-size:29px;line-height:36px;color:#fdf6e3;-webkit-text-stroke:0.55px #fdf6e3;transform-origin:0 0;transform:scaleX(0.92)" >The Gourmet</span></span><span class="t" style="left:123.9px;top:73.3px;font-weight:700;font-size:62.2px;line-height:58px;color:#fdf6e3;transform-origin:0 0;transform:scaleX(0.533);letter-spacing:3px;text-shadow:1px 0 #fdf6e3,-1px 0 #fdf6e3,2px 0 #fdf6e3,-2px 0 #fdf6e3,2.6px 0 #fdf6e3,-2.6px 0 #fdf6e3" >TABLE</span><span class="t" style="-webkit-text-stroke:0;left:134.6px;top:132px;font-size:8.4px;line-height:10px;letter-spacing:2.0px;color:#efe7d6;transform-origin:0 50%;transform:scaleX(0.86)" >INVENTORY SHEET</span><div class="a" style="left:18.2px;top:168.7px;width:326.6px;height:253.4px;background:#fdf0d3"></div><div class="a c h" style="left:18.80px;top:169.20px;width:19.60px;height:31.30px;background:#f6edd6"><span>Item<br>ID</span></div><div class="a c h" style="left:39.60px;top:169.20px;width:24.70px;height:31.30px;background:#f6edd6"><span>Item<br>Name</span></div><div class="a c h" style="left:65.50px;top:169.20px;width:33.60px;height:31.30px;background:#f6edd6"><span>Category</span></div><div class="a c h" style="left:100.30px;top:169.20px;width:26.00px;height:31.30px;background:#f6edd6"><span>Stock<br>Quantity</span></div><div class="a c h" style="left:127.50px;top:169.20px;width:27.40px;height:31.30px;background:#f6edd6"><span>Unit<br>Measure</span></div><div class="a c h" style="left:156.10px;top:169.20px;width:20.10px;height:31.30px;background:#f6edd6"><span>Unit<br>Cost<br>($)</span></div><div class="a c h" style="left:177.40px;top:169.20px;width:20.60px;height:31.30px;background:#f6edd6"><span>Total<br>Value<br>($)</span></div><div class="a c h" style="left:199.20px;top:169.20px;width:23.80px;height:31.30px;background:#f6edd6"><span>Reorder<br>Point</span></div><div class="a c h" style="left:224.20px;top:169.20px;width:34.50px;height:31.30px;background:#f6edd6"><span>Supplier</span></div><div class="a c h" style="left:259.90px;top:169.20px;width:30.50px;height:31.30px;background:#f6edd6"><span>Last<br>Restocked</span></div><div class="a c h" style="left:291.60px;top:169.20px;width:28.70px;height:31.30px;background:#f6edd6"><span>Expiration<br>Date</span></div><div class="a c h" style="left:321.50px;top:169.20px;width:22.70px;height:31.30px;background:#f6edd6"><span>Status</span></div><div class="a c" style="left:18.80px;top:201.50px;width:19.60px;height:30.58px;background:#ffffff"><span>FD001</span></div><div class="a c" style="left:39.60px;top:201.50px;width:24.70px;height:30.58px;background:#ffffff"><span>Chicken<br>Breast</span></div><div class="a c" style="left:65.50px;top:201.50px;width:33.60px;height:30.58px;background:#ffffff"><span>Protein</span></div><div class="a c" style="left:100.30px;top:201.50px;width:26.00px;height:30.58px;background:#ffffff"><span>100 lbs</span></div><div class="a c" style="left:127.50px;top:201.50px;width:27.40px;height:30.58px;background:#ffffff"><span>lbs</span></div><div class="a c" style="left:156.10px;top:201.50px;width:20.10px;height:30.58px;background:#ffffff"><span>4.5</span></div><div class="a c" style="left:177.40px;top:201.50px;width:20.60px;height:30.58px;background:#ffffff"><span>450</span></div><div class="a c" style="left:199.20px;top:201.50px;width:23.80px;height:30.58px;background:#ffffff"><span>40</span></div><div class="a c" style="left:224.20px;top:201.50px;width:34.50px;height:30.58px;background:#ffffff"><span>Farm Fresh<br>Poultry</span></div><div class="a c" style="left:259.90px;top:201.50px;width:30.50px;height:30.58px;background:#ffffff"><span class="d">YYYY-MM-DD</span></div><div class="a c" style="left:291.60px;top:201.50px;width:28.70px;height:30.58px;background:#ffffff"><span class="d">YYYY-MM-<br>DD</span></div><div class="a c" style="left:321.50px;top:201.50px;width:22.70px;height:30.58px;background:#ffffff"><span>In Stock</span></div><div class="a c" style="left:18.80px;top:233.08px;width:19.60px;height:30.58px;background:#c9e0d9"><span>FD002</span></div><div class="a c" style="left:39.60px;top:233.08px;width:24.70px;height:30.58px;background:#c9e0d9"><span>Salmon<br>Filet</span></div><div class="a c" style="left:65.50px;top:233.08px;width:33.60px;height:30.58px;background:#c9e0d9"><span>Protein</span></div><div class="a c" style="left:100.30px;top:233.08px;width:26.00px;height:30.58px;background:#c9e0d9"><span>50 lbs</span></div><div class="a c" style="left:127.50px;top:233.08px;width:27.40px;height:30.58px;background:#c9e0d9"><span>lbs</span></div><div class="a c" style="left:156.10px;top:233.08px;width:20.10px;height:30.58px;background:#c9e0d9"><span>8</span></div><div class="a c" style="left:177.40px;top:233.08px;width:20.60px;height:30.58px;background:#c9e0d9"><span>400</span></div><div class="a c" style="left:199.20px;top:233.08px;width:23.80px;height:30.58px;background:#c9e0d9"><span>20</span></div><div class="a c" style="left:224.20px;top:233.08px;width:34.50px;height:30.58px;background:#c9e0d9"><span>Ocean<br>Catch Ltd.</span></div><div class="a c" style="left:259.90px;top:233.08px;width:30.50px;height:30.58px;background:#c9e0d9"><span class="d">YYYY-MM-DD</span></div><div class="a c" style="left:291.60px;top:233.08px;width:28.70px;height:30.58px;background:#c9e0d9"><span class="d">YYYY-MM-<br>DD</span></div><div class="a c" style="left:321.50px;top:233.08px;width:22.70px;height:30.58px;background:#c9e0d9"><span>Not in<br>Stock</span></div><div class="a c" style="left:18.80px;top:264.66px;width:19.60px;height:30.58px;background:#ffffff"><span>FD003</span></div><div class="a c" style="left:39.60px;top:264.66px;width:24.70px;height:30.58px;background:#ffffff"><span>Yukon<br>Gold<br>Potatoes</span></div><div class="a c" style="left:65.50px;top:264.66px;width:33.60px;height:30.58px;background:#ffffff"><span>Produce</span></div><div class="a c" style="left:100.30px;top:264.66px;width:26.00px;height:30.58px;background:#ffffff"><span>200 lbs</span></div><div class="a c" style="left:127.50px;top:264.66px;width:27.40px;height:30.58px;background:#ffffff"><span>lbs</span></div><div class="a c" style="left:156.10px;top:264.66px;width:20.10px;height:30.58px;background:#ffffff"><span>0.75</span></div><div class="a c" style="left:177.40px;top:264.66px;width:20.60px;height:30.58px;background:#ffffff"><span>150</span></div><div class="a c" style="left:199.20px;top:264.66px;width:23.80px;height:30.58px;background:#ffffff"><span>60</span></div><div class="a c" style="left:224.20px;top:264.66px;width:34.50px;height:30.58px;background:#ffffff"><span>Green<br>Valley Farms</span></div><div class="a c" style="left:259.90px;top:264.66px;width:30.50px;height:30.58px;background:#ffffff"><span class="d">YYYY-MM-DD</span></div><div class="a c" style="left:291.60px;top:264.66px;width:28.70px;height:30.58px;background:#ffffff"><span class="d">YYYY-MM-<br>DD</span></div><div class="a c" style="left:321.50px;top:264.66px;width:22.70px;height:30.58px;background:#ffffff"><span>In Stock</span></div><div class="a c" style="left:18.80px;top:296.24px;width:19.60px;height:30.58px;background:#c9e0d9"><span>FD004</span></div><div class="a c" style="left:39.60px;top:296.24px;width:24.70px;height:30.58px;background:#c9e0d9"><span>Roma<br>Tomatoes</span></div><div class="a c" style="left:65.50px;top:296.24px;width:33.60px;height:30.58px;background:#c9e0d9"><span>Produce</span></div><div class="a c" style="left:100.30px;top:296.24px;width:26.00px;height:30.58px;background:#c9e0d9"><span>80 lbs</span></div><div class="a c" style="left:127.50px;top:296.24px;width:27.40px;height:30.58px;background:#c9e0d9"><span>lbs</span></div><div class="a c" style="left:156.10px;top:296.24px;width:20.10px;height:30.58px;background:#c9e0d9"><span>1.2</span></div><div class="a c" style="left:177.40px;top:296.24px;width:20.60px;height:30.58px;background:#c9e0d9"><span>96</span></div><div class="a c" style="left:199.20px;top:296.24px;width:23.80px;height:30.58px;background:#c9e0d9"><span>30</span></div><div class="a c" style="left:224.20px;top:296.24px;width:34.50px;height:30.58px;background:#c9e0d9"><span>Fresh Harvest<br>Co.</span></div><div class="a c" style="left:259.90px;top:296.24px;width:30.50px;height:30.58px;background:#c9e0d9"><span class="d">YYYY-MM-DD</span></div><div class="a c" style="left:291.60px;top:296.24px;width:28.70px;height:30.58px;background:#c9e0d9"><span class="d">YYYY-MM-<br>DD</span></div><div class="a c" style="left:321.50px;top:296.24px;width:22.70px;height:30.58px;background:#c9e0d9"><span>Not in<br>Stock</span></div><div class="a c" style="left:18.80px;top:327.82px;width:19.60px;height:30.58px;background:#c9e0d9"><span>FD005</span></div><div class="a c" style="left:39.60px;top:327.82px;width:24.70px;height:30.58px;background:#c9e0d9"><span>Cheddar<br>Cheese</span></div><div class="a c" style="left:65.50px;top:327.82px;width:33.60px;height:30.58px;background:#c9e0d9"><span>Dairy</span></div><div class="a c" style="left:100.30px;top:327.82px;width:26.00px;height:30.58px;background:#c9e0d9"><span>40 lbs</span></div><div class="a c" style="left:127.50px;top:327.82px;width:27.40px;height:30.58px;background:#c9e0d9"><span>lbs</span></div><div class="a c" style="left:156.10px;top:327.82px;width:20.10px;height:30.58px;background:#c9e0d9"><span>5</span></div><div class="a c" style="left:177.40px;top:327.82px;width:20.60px;height:30.58px;background:#c9e0d9"><span>200</span></div><div class="a c" style="left:199.20px;top:327.82px;width:23.80px;height:30.58px;background:#c9e0d9"><span>10</span></div><div class="a c" style="left:224.20px;top:327.82px;width:34.50px;height:30.58px;background:#c9e0d9"><span>Dairyland<br>Supplies</span></div><div class="a c" style="left:259.90px;top:327.82px;width:30.50px;height:30.58px;background:#c9e0d9"><span class="d">YYYY-MM-DD</span></div><div class="a c" style="left:291.60px;top:327.82px;width:28.70px;height:30.58px;background:#c9e0d9"><span class="d">YYYY-MM-<br>DD</span></div><div class="a c" style="left:321.50px;top:327.82px;width:22.70px;height:30.58px;background:#c9e0d9"><span>Not in<br>Stock</span></div><div class="a c" style="left:18.80px;top:359.40px;width:19.60px;height:30.58px;background:#ffffff"><span>FD006</span></div><div class="a c" style="left:39.60px;top:359.40px;width:24.70px;height:30.58px;background:#ffffff"><span>Pasta</span></div><div class="a c" style="left:65.50px;top:359.40px;width:33.60px;height:30.58px;background:#ffffff"><span>Dry Goods</span></div><div class="a c" style="left:100.30px;top:359.40px;width:26.00px;height:30.58px;background:#ffffff"><span>100 lbs</span></div><div class="a c" style="left:127.50px;top:359.40px;width:27.40px;height:30.58px;background:#ffffff"><span>lbs</span></div><div class="a c" style="left:156.10px;top:359.40px;width:20.10px;height:30.58px;background:#ffffff"><span>1.1</span></div><div class="a c" style="left:177.40px;top:359.40px;width:20.60px;height:30.58px;background:#ffffff"><span>110</span></div><div class="a c" style="left:199.20px;top:359.40px;width:23.80px;height:30.58px;background:#ffffff"><span>25</span></div><div class="a c" style="left:224.20px;top:359.40px;width:34.50px;height:30.58px;background:#ffffff"><span>Golden<br>Wheat Co.</span></div><div class="a c" style="left:259.90px;top:359.40px;width:30.50px;height:30.58px;background:#ffffff"><span class="d">YYYY-MM-DD</span></div><div class="a c" style="left:291.60px;top:359.40px;width:28.70px;height:30.58px;background:#ffffff"><span class="d">YYYY-MM-<br>DD</span></div><div class="a c" style="left:321.50px;top:359.40px;width:22.70px;height:30.58px;background:#ffffff"><span>In Stock</span></div><div class="a c" style="left:18.80px;top:390.98px;width:19.60px;height:30.58px;background:#ffffff"><span>FD007</span></div><div class="a c" style="left:39.60px;top:390.98px;width:24.70px;height:30.58px;background:#ffffff"><span>Olive Oil<br>(Extra<br>Virgin)</span></div><div class="a c" style="left:65.50px;top:390.98px;width:33.60px;height:30.58px;background:#ffffff"><span>Condiments</span></div><div class="a c" style="left:100.30px;top:390.98px;width:26.00px;height:30.58px;background:#ffffff"><span>20 gallons</span></div><div class="a c" style="left:127.50px;top:390.98px;width:27.40px;height:30.58px;background:#ffffff"><span>gallons</span></div><div class="a c" style="left:156.10px;top:390.98px;width:20.10px;height:30.58px;background:#ffffff"><span>12</span></div><div class="a c" style="left:177.40px;top:390.98px;width:20.60px;height:30.58px;background:#ffffff"><span>240</span></div><div class="a c" style="left:199.20px;top:390.98px;width:23.80px;height:30.58px;background:#ffffff"><span>5</span></div><div class="a c" style="left:224.20px;top:390.98px;width:34.50px;height:30.58px;background:#ffffff"><span>Mediterranean<br>Imports</span></div><div class="a c" style="left:259.90px;top:390.98px;width:30.50px;height:30.58px;background:#ffffff"><span class="d">YYYY-MM-DD</span></div><div class="a c" style="left:291.60px;top:390.98px;width:28.70px;height:30.58px;background:#ffffff"><span class="d">YYYY-MM-<br>DD</span></div><div class="a c" style="left:321.50px;top:390.98px;width:22.70px;height:30.58px;background:#ffffff"><span>In Stock</span></div><div class="a" style="left:116px;top:435.5px;width:16.3px;height:7px;background:#fff"></div><span class="t" style="left:136px;top:434.6px;-webkit-text-stroke:0;font-size:5.3px;line-height:8px;color:#6a6a6a">In Stock</span><div class="a" style="left:196px;top:435.5px;width:15.8px;height:7px;background:#c9e0d9"></div><span class="t" style="left:215.300px;top:434.6px;-webkit-text-stroke:0;font-size:5.3px;line-height:8px;color:#6a6a6a">Not in Stock</span></div></div>
<svg style="left:915.500px;top:119px" width="13" height="13" viewBox="0 0 26 26"><circle cx="13" cy="13" r="11.500" fill="none" stroke="#f3f6f9" stroke-width="1.800"/><circle cx="7.500" cy="13" r="1.400" fill="#f3f6f9"/><circle cx="13" cy="13" r="1.400" fill="#f3f6f9"/><circle cx="18.500" cy="13" r="1.400" fill="#f3f6f9"/></svg>
<span class="t" style="left:918.80px;top:232.75px;font-size:8.38px;line-height:10.89px;color:#2d8cf0;font-weight:700;transform:scaleX(0.900);">1</span>
<div class="a" style="left:974.4px;top:246px;width:16.4px;height:16.4px;border-radius:50%;background:#fdfdfe"></div>
<svg style="left:977px;top:249.8px" width="11.2" height="8.4" viewBox="0 0 22.4 16.8"><rect x="0.8" y="0.8" width="16.4" height="12.4" rx="1" fill="#fff" stroke="#c6c4de" stroke-width="1.2"/><rect x="5.2" y="2.8" width="16.6" height="13.6" rx="1.6" fill="#1c2c44"/><path d="M7.5 9.6 H12 V6.2 L17.6 9.6 L12 13 V9.6" fill="#fff" stroke="#fff" stroke-width="1.6" stroke-linejoin="round"/></svg>
<div class="a" style="left:911px;top:524.700px;width:113px;height:27.300px;background:#fff;border-top:1px solid #e4e9ee;box-sizing:border-box"></div>
<div class="a" style="left:958px;top:529.800px;width:37px;height:19px;border-radius:3px;background:#dde5ec"></div>
<div class="a" style="left:977px;top:529.800px;width:18px;height:19px;box-sizing:border-box;border-radius:3px;background:#fff;border:1px solid #cfd8e0"></div>
<svg style="left:958px;top:529.800px" width="19" height="19" viewBox="0 0 19 19"><g fill="none" stroke="#a9b4c0" stroke-width="0.800"><rect x="4.6" y="3.4" width="3.400" height="3.400" rx="0.4"/><rect x="9.8" y="3.4" width="3.400" height="3.400" rx="0.4"/><rect x="4.6" y="8.0" width="3.400" height="3.400" rx="0.4"/><rect x="9.8" y="8.0" width="3.400" height="3.400" rx="0.4"/><rect x="4.6" y="12.6" width="3.400" height="3.400" rx="0.4"/><rect x="9.8" y="12.6" width="3.400" height="3.400" rx="0.4"/></g></svg>
<svg style="left:977px;top:529.800px" width="18" height="19" viewBox="0 0 18 19"><g fill="none" stroke="#3a4254" stroke-width="0.900"><rect x="6.200" y="3.4" width="5.600" height="3.400" rx="0.5"/><rect x="6.200" y="8.0" width="5.600" height="3.400" rx="0.5"/><rect x="6.200" y="12.6" width="5.600" height="3.400" rx="0.5"/></g></svg>
</body></html>
